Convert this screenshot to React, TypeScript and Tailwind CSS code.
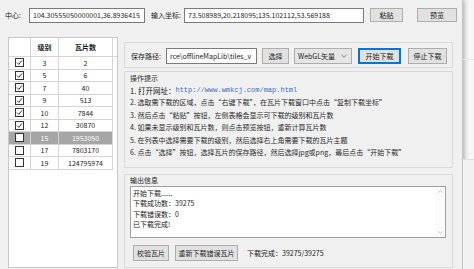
import React from 'react'

const rows = [
  { on: true, level: 3, count: '2' },
  { on: true, level: 5, count: '6' },
  { on: true, level: 7, count: '40' },
  { on: true, level: 9, count: '513' },
  { on: true, level: 10, count: '7844' },
  { on: true, level: 12, count: '30870' },
  { on: false, level: 15, count: '1953050', sel: true },
  { on: false, level: 17, count: '7803170' },
  { on: false, level: 19, count: '124795974' },
]

const tips = [
  '2. 选取需下载的区域，点击“右键下载”，在瓦片下载窗口中点击“复制下载坐标”',
  '3. 然后点击“粘贴”按钮，左侧表格会显示可下载的级别和瓦片数',
  '4. 如果未显示级别和瓦片数，则点击预览按钮，重新计算瓦片数',
  '5. 在列表中选择需要下载的级别，然后选择右上角需要下载的瓦片主题',
  '6. 点击“选择”按钮，选择瓦片的保存路径，然后选择jpg或png，最后点击“开始下载”',
]

function Check({ on }: { on: boolean }) {
  return (
    <span className="w-[9px] h-[9px] border border-[#333333] bg-white flex items-center justify-center">
      {on && (
        <svg width="7" height="7" viewBox="0 0 7 7">
          <path d="M1 3.6 L2.8 5.4 L6 1.4" stroke="#333333" strokeWidth="1" fill="none" />
        </svg>
      )}
    </span>
  )
}

function Btn({ w, children, focus }: { w: string; children: React.ReactNode; focus?: boolean }) {
  return (
    <div
      className={`${w} h-[16px] flex items-center justify-center bg-[#e1e1e1] text-[#222] ${
        focus ? 'border-2 border-[#0078d7]' : 'border border-[#adadad]'
      }`}
    >
      {children}
    </div>
  )
}

export default function App() {
  return (
    <div className="w-[474px] h-[269px] flex overflow-hidden bg-[#f7f7f7] text-[7px] text-[#1a1a1a] font-['Noto_Sans_CJK_SC',sans-serif]">
      <div className="w-[463px] h-full shrink-0 bg-[#f0f0f0] border-r border-[#c4c4c4] shadow-[2px_0_4px_rgba(0,0,0,0.25)] flex flex-col">
        {/* top coordinate row */}
        <div className="h-[30px] flex items-start pt-[8px]">
          <span className="ml-[5px] w-[24px] h-[15px] leading-[15px]">中心:</span>
          <div className="w-[116px] h-[15px] bg-white border border-[#7a7a7a] px-[3px] leading-[13px] overflow-hidden whitespace-nowrap">
            104.30555050000001,36.8936415
          </div>
          <span className="ml-[6px] w-[33px] h-[15px] leading-[15px]">输入坐标:</span>
          <div className="w-[180px] h-[15px] bg-white border border-[#7a7a7a] px-[3px] leading-[13px] overflow-hidden whitespace-nowrap">
            73.508989,20.218095;135.102112,53.569188
          </div>
          <div className="ml-[6px] w-[33px] h-[14px] flex items-center justify-center bg-[#e1e1e1] border border-[#adadad]">
            粘贴
          </div>
          <div className="ml-[14px] w-[40px] h-[14px] flex items-center justify-center bg-[#e1e1e1] border border-[#adadad]">
            预览
          </div>
        </div>

        {/* body */}
        <div className="flex flex-1 pl-[8px]">
          {/* level list */}
          <div className="w-[110px] h-[231px] mt-[7px] bg-white border border-[#c8c8c8]">
            <div className="flex h-[19px] border-b border-[#d4d4d4] font-bold">
              <div className="w-[22px] border-r border-[#d4d4d4]" />
              <div className="w-[28px] border-r border-[#d4d4d4] flex items-center justify-center">级别</div>
              <div className="w-[54px] border-r border-[#d4d4d4] flex items-center justify-center">瓦片数</div>
            </div>
            {rows.map((r) => (
              <div
                key={r.level}
                className={`flex h-[12.5px] w-[104px] border-b border-[#d4d4d4] ${
                  r.sel ? 'bg-[#a6a6a6] text-white' : ''
                }`}
              >
                <div className="w-[22px] border-r border-[#d4d4d4] flex items-center justify-center">
                  <Check on={r.on} />
                </div>
                <div className="w-[28px] border-r border-[#d4d4d4] flex items-center justify-center">{r.level}</div>
                <div className="w-[54px] border-r border-[#d4d4d4] flex items-center justify-center">{r.count}</div>
              </div>
            ))}
          </div>

          {/* right column */}
          <div className="ml-[6px] w-[329px] flex flex-col mt-[12px]">
            <div className="h-[26px] border border-[#dadada] flex items-center pl-[6px] pt-[2px]">
              <span className="w-[35px]">保存路径:</span>
              <div className="w-[91px] h-[16px] bg-white border border-[#7a7a7a] pl-[3px] leading-[14px] overflow-hidden whitespace-nowrap">
                rce\offlineMapLib\tiles_v
              </div>
              <div className="ml-[5px]">
                <Btn w="w-[27px]">选择</Btn>
              </div>
              <div className="ml-[5px] w-[58px] h-[16px] bg-[#e5e5e5] border border-[#adadad] flex items-center pl-[3px] pr-[4px] justify-between">
                <span>WebGL矢量</span>
                <svg width="6" height="4" viewBox="0 0 6 4">
                  <path d="M0.5 0.8 L3 3.2 L5.5 0.8" stroke="#666" strokeWidth="0.8" fill="none" />
                </svg>
              </div>
              <div className="ml-[6px]">
                <Btn w="w-[43px]" focus>
                  开始下载
                </Btn>
              </div>
              <div className="ml-[7px]">
                <Btn w="w-[39px]">停止下载</Btn>
              </div>
            </div>

            <div className="mt-[3px] h-[97px] border border-[#dadada] pl-[5px] text-[#2a2a2a]">
              <div className="h-[12px] leading-[12px]">操作提示</div>
              <div className="h-[12.4px] flex items-center whitespace-nowrap">
                <span className="text-[7.5px] text-[#111]">1. 打开网址：</span>
                <span className="font-['Liberation_Mono',monospace] text-[#3a6cc0]">http://www.wmkcj.com/map.html</span>
              </div>
              {tips.map((t) => (
                <div key={t} className="h-[12.4px] flex items-center whitespace-nowrap">
                  {t}
                </div>
              ))}
            </div>

            <div className="mt-[6px] h-[94px] border border-[#dadada] pl-[5px]">
              <div className="h-[10px] leading-[10px]">输出信息</div>
              <div className="mt-[1px] w-[316px] h-[52px] bg-white border border-[#a0a0a0] flex">
                <div className="flex-1 pl-[2px] pt-[1px] leading-[10.4px]">
                  <div>开始下载......</div>
                  <div>下载成功数：39275</div>
                  <div>下载错误数：0</div>
                  <div>已下载完成!</div>
                </div>
                <div className="w-[10px] flex flex-col items-center justify-between py-[3px] bg-[#fbfbfb]">
                  <svg width="5" height="3" viewBox="0 0 5 3">
                    <path d="M0.5 2.6 L2.5 0.6 L4.5 2.6" stroke="#b0b0b0" strokeWidth="0.8" fill="none" />
                  </svg>
                  <svg width="5" height="3" viewBox="0 0 5 3">
                    <path d="M0.5 0.4 L2.5 2.4 L4.5 0.4" stroke="#b0b0b0" strokeWidth="0.8" fill="none" />
                  </svg>
                </div>
              </div>
              <div className="mt-[7px] flex items-center">
                <div className="ml-[3px]">
                  <Btn w="w-[36px]">校验瓦片</Btn>
                </div>
                <div className="ml-[6px]">
                  <Btn w="w-[63px]">重新下载错误瓦片</Btn>
                </div>
                <span className="ml-[9px]">下载完成：39275/39275</span>
              </div>
            </div>
          </div>
        </div>
      </div>
      <div className="flex-1 flex flex-col">
        <div className="h-[60px] border-b border-[#e6e6e6]" />
        <div className="h-[100px] border-b border-[#e0e0e0]" />
        <div className="flex-1 bg-[#f2f2f2]" />
      </div>
    </div>
  )
}
